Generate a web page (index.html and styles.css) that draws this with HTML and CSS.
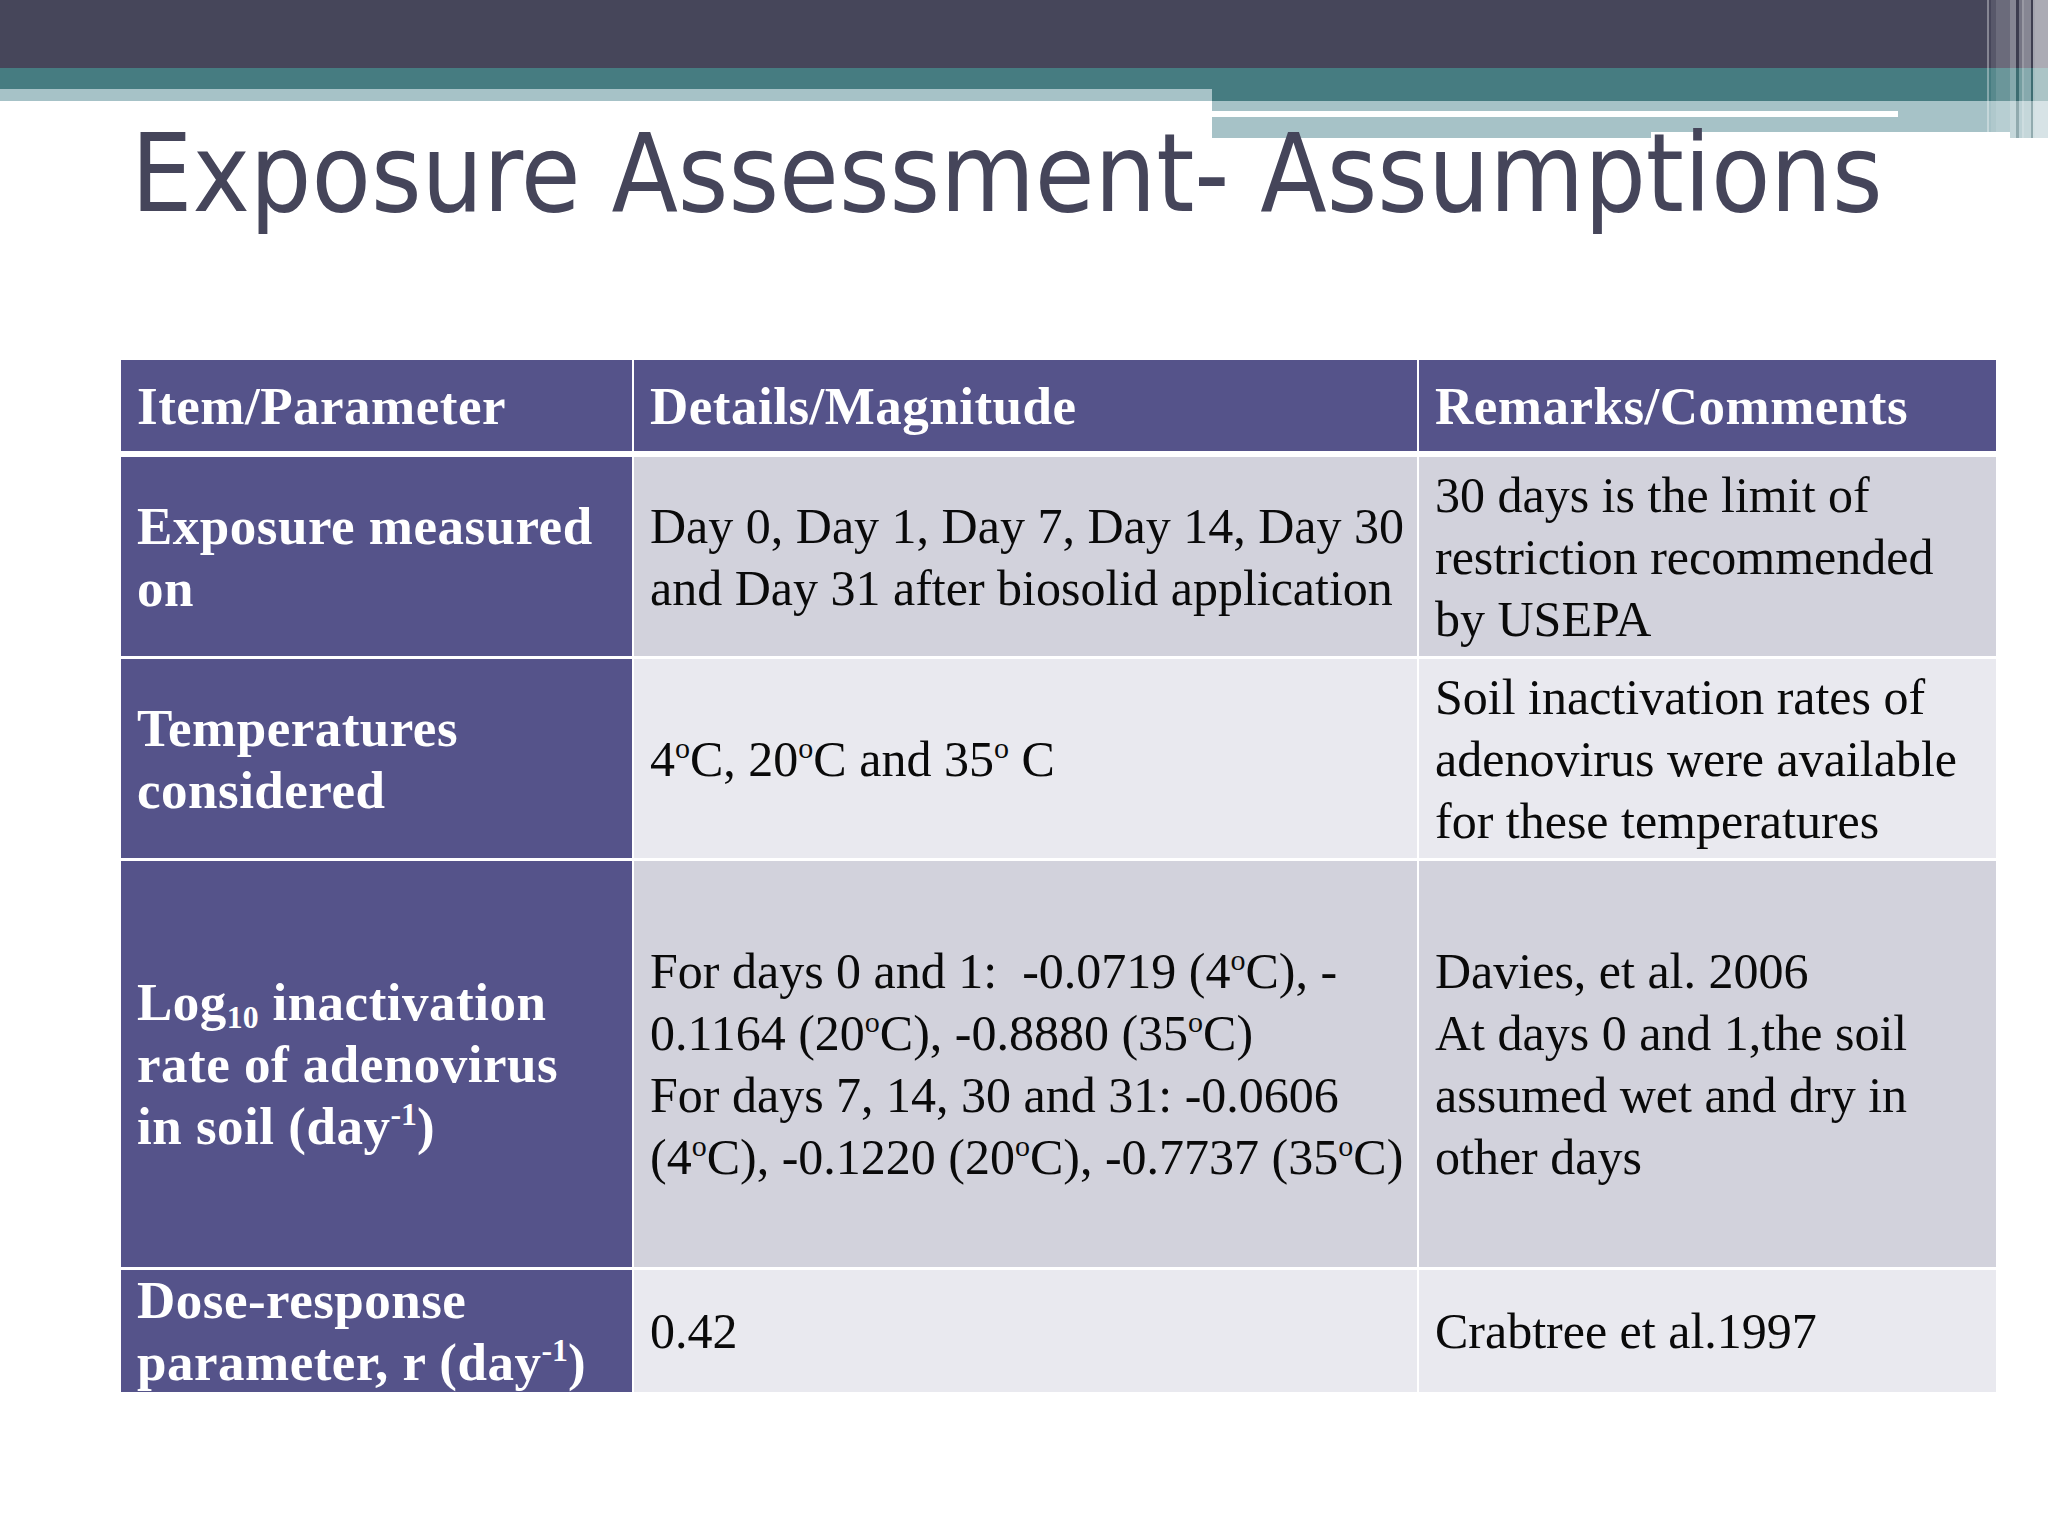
FILE: index.html
```html
<!DOCTYPE html>
<html lang="en">
<head>
<meta charset="utf-8">
<title>Exposure Assessment- Assumptions</title>
<link rel="stylesheet" href="styles.css">
</head>
<body>
<div class="slide">
  <header class="deco">
    <div class="bar-dark"></div>
    <div class="bands">
      <div class="bands-left">
        <div class="teal-short"></div>
        <div class="light-short"></div>
      </div>
      <div class="bands-right">
        <div class="teal-tall"></div>
        <div class="light-block"><div class="white-line"></div></div>
        <div class="tail-row"><div class="tail-a"></div><div class="tail-gap"></div><div class="tail-b"></div></div>
      </div>
    </div>
    <svg class="stripes" width="61" height="138" viewBox="0 0 61 138">
      <rect x="0" y="0" width="2" height="132" fill="#fff" fill-opacity="0.35"/>
      <rect x="4" y="0" width="5" height="132" fill="#fff" fill-opacity="0.1"/>
      <rect x="9" y="0" width="14" height="132" fill="#fff" fill-opacity="0.2"/>
      <rect x="23" y="0" width="6" height="138" fill="#fff" fill-opacity="0.35"/>
      <rect x="29" y="0" width="3" height="138" fill="#000" fill-opacity="0.12"/>
      <rect x="32" y="0" width="3" height="138" fill="#fff" fill-opacity="0.25"/>
      <rect x="35" y="0" width="2" height="138" fill="#fff" fill-opacity="0.45"/>
      <rect x="37" y="0" width="7" height="138" fill="#fff" fill-opacity="0.35"/>
      <rect x="44" y="0" width="2" height="138" fill="#000" fill-opacity="0.12"/>
      <rect x="46" y="0" width="2" height="138" fill="#fff" fill-opacity="0.5"/>
      <rect x="48" y="0" width="13" height="138" fill="#fff" fill-opacity="0.55"/>
    </svg>
  </header>

  <h1 class="title">Exposure Assessment- Assumptions</h1>

  <div class="table">
    <div class="thead">
      <div class="cell head"><div class="txt">Item/Parameter</div></div>
      <div class="cell head"><div class="txt">Details/Magnitude</div></div>
      <div class="cell head"><div class="txt">Remarks/Comments</div></div>
    </div>
    <div class="tbody">
      <div class="cell head"><div class="txt">Exposure measured<br>on</div></div>
      <div class="cell dark"><div class="txt">Day 0, Day 1, Day 7, Day 14, Day 30<br>and Day 31 after biosolid application</div></div>
      <div class="cell dark"><div class="txt">30 days is the limit of<br>restriction recommended<br>by USEPA</div></div>

      <div class="cell head"><div class="txt">Temperatures<br>considered</div></div>
      <div class="cell light"><div class="txt">4<sup>o</sup>C, 20<sup>o</sup>C and 35<sup>o</sup> C</div></div>
      <div class="cell light"><div class="txt">Soil inactivation rates of<br>adenovirus were available<br>for these temperatures</div></div>

      <div class="cell head"><div class="txt">Log<sub>10</sub> inactivation<br>rate of adenovirus<br>in soil (day<sup>-1</sup>)</div></div>
      <div class="cell dark"><div class="txt">For days 0 and 1: &nbsp;-0.0719 (4<sup>o</sup>C), -<br>0.1164 (20<sup>o</sup>C), -0.8880 (35<sup>o</sup>C)<br>For days 7, 14, 30 and 31: -0.0606<br>(4<sup>o</sup>C), -0.1220 (20<sup>o</sup>C), -0.7737 (35<sup>o</sup>C)</div></div>
      <div class="cell dark"><div class="txt">Davies, et al. 2006<br>At days 0 and 1,the soil<br>assumed wet and dry in<br>other days</div></div>

      <div class="cell head"><div class="txt">Dose-response<br>parameter, r (day<sup>-1</sup>)</div></div>
      <div class="cell light"><div class="txt">0.42</div></div>
      <div class="cell light"><div class="txt">Crabtree et al.1997</div></div>
    </div>
  </div>
</div>
</body>
</html>
```

FILE: styles.css
```css
html, body {
  margin: 0;
  padding: 0;
  background: #ffffff;
}

.slide {
  width: 2048px;
  height: 1536px;
  overflow: hidden;
  background: #ffffff;
}

/* ---------- header decoration ---------- */
.deco {
  position: relative;
  height: 138px;
}

.bar-dark {
  height: 68px;
  background: #46465a;
}

.bands {
  display: flex;
  height: 70px;
}

.bands-left {
  width: 1212px;
  display: flex;
  flex-direction: column;
}

.teal-short {
  height: 21px;
  background: #467c81;
}

.light-short {
  height: 12px;
  background: #a6c2c7;
}

.bands-right {
  flex: 1;
  display: flex;
  flex-direction: column;
}

.teal-tall {
  height: 33px;
  background: #467c81;
}

.light-block {
  height: 31px;
  background: #a6c2c7;
  padding-top: 10px;
  box-sizing: border-box;
}

.white-line {
  width: 686px;
  height: 6px;
  background: #ffffff;
}

.tail-row {
  display: flex;
  height: 6px;
}

.tail-a {
  width: 439px;
  background: #a6c2c7;
}

.tail-gap {
  flex: 1;
}

.tail-b {
  width: 38px;
  background: #a6c2c7;
}

.stripes {
  position: absolute;
  top: 0;
  right: 0;
  display: block;
}

/* ---------- title ---------- */
.title {
  position: relative;
  margin: -22px 0 0 131px;
  font-family: "DejaVu Sans Condensed", "DejaVu Sans", sans-serif;
  font-stretch: condensed;
  font-weight: normal;
  font-size: 108px;
  line-height: 116px;
  letter-spacing: 0;
  color: #45455a;
  white-space: nowrap;
}

/* ---------- table ---------- */
.table {
  margin: 128px 0 0 121px;
  width: 1875px;
  font-family: "Liberation Serif", "Times New Roman", serif;
}

.thead,
.tbody {
  display: grid;
  grid-template-columns: 511px 783px 577px;
  column-gap: 2px;
  background: #ffffff;
}

.thead {
  grid-template-rows: 91px;
  margin-bottom: 6px;
}

.tbody {
  grid-template-rows: 199px 199px 406px 122px;
  row-gap: 3px;
}

.cell {
  display: flex;
  flex-direction: column;
  justify-content: center;
  padding: 0 16px;
  white-space: nowrap;
  font-size: 50px;
  line-height: 62px;
  color: #0a0a0a;
  overflow: visible;
}

.head {
  background: #55538a;
  color: #ffffff;
  font-weight: bold;
  font-size: 53px;
  letter-spacing: 0.5px;
}

.dark {
  background: #d2d2dc;
}

.light {
  background: #e9e9ef;
}

.cell sup {
  font-size: 0.6em;
  line-height: 0;
  vertical-align: 0.6em;
  letter-spacing: 0;
}

.cell sub {
  font-size: 0.6em;
  line-height: 0;
  vertical-align: -0.25em;
  letter-spacing: 0;
}
```
